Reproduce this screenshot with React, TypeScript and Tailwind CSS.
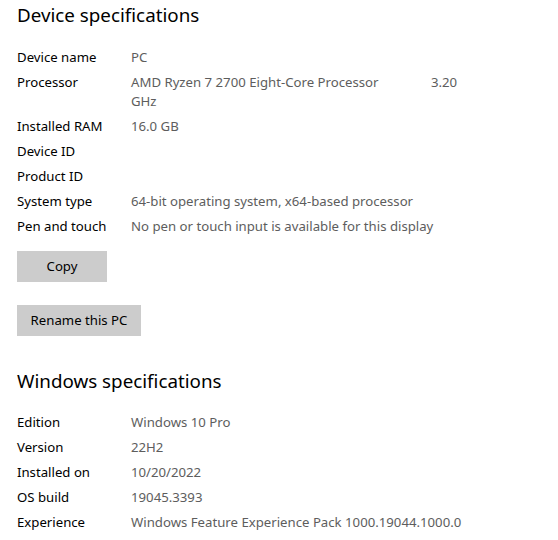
import React from "react";

const font = { fontFamily: '"Noto Sans", "Open Sans", sans-serif' };

function Row({ label, children }: { label: string; children: React.ReactNode }) {
  return (
    <div className="flex py-[3px] leading-[19px]">
      <div className="w-[114px] shrink-0 text-black">{label}</div>
      <div className="text-[#5d5d5d]">{children}</div>
    </div>
  );
}

export default function App() {
  return (
    <div className="w-[558px] h-[540px] bg-white px-[17px] text-[13.2px] overflow-hidden" style={font}>
      <h1 className="text-[18.8px] leading-[28px] pt-[1px] text-black">Device specifications</h1>
      <div className="mt-[16px]">
        <Row label="Device name">PC</Row>
        <Row label="Processor">
          <div>
            <span className="inline-block w-[300px]">AMD Ryzen 7 2700 Eight-Core Processor</span>
            <span>3.20</span>
          </div>
          <div>GHz</div>
        </Row>
        <Row label="Installed RAM">16.0 GB</Row>
        <Row label="Device ID">{""}</Row>
        <Row label="Product ID">{""}</Row>
        <Row label="System type">64-bit operating system, x64-based processor</Row>
        <Row label="Pen and touch">No pen or touch input is available for this display</Row>
      </div>
      <div className="mt-[12px] flex flex-col items-start gap-[23px]">
        <button className="w-[90px] h-[31px] bg-[#cccccc] text-black">Copy</button>
        <button className="w-[124px] h-[31px] bg-[#cccccc] text-black">Rename this PC</button>
      </div>
      <h2 className="mt-[31px] text-[18.8px] leading-[28px] text-black">Windows specifications</h2>
      <div className="mt-[15px]">
        <Row label="Edition">Windows 10 Pro</Row>
        <Row label="Version">22H2</Row>
        <Row label="Installed on">10/20/2022</Row>
        <Row label="OS build">19045.3393</Row>
        <Row label="Experience">Windows Feature Experience Pack 1000.19044.1000.0</Row>
      </div>
    </div>
  );
}
